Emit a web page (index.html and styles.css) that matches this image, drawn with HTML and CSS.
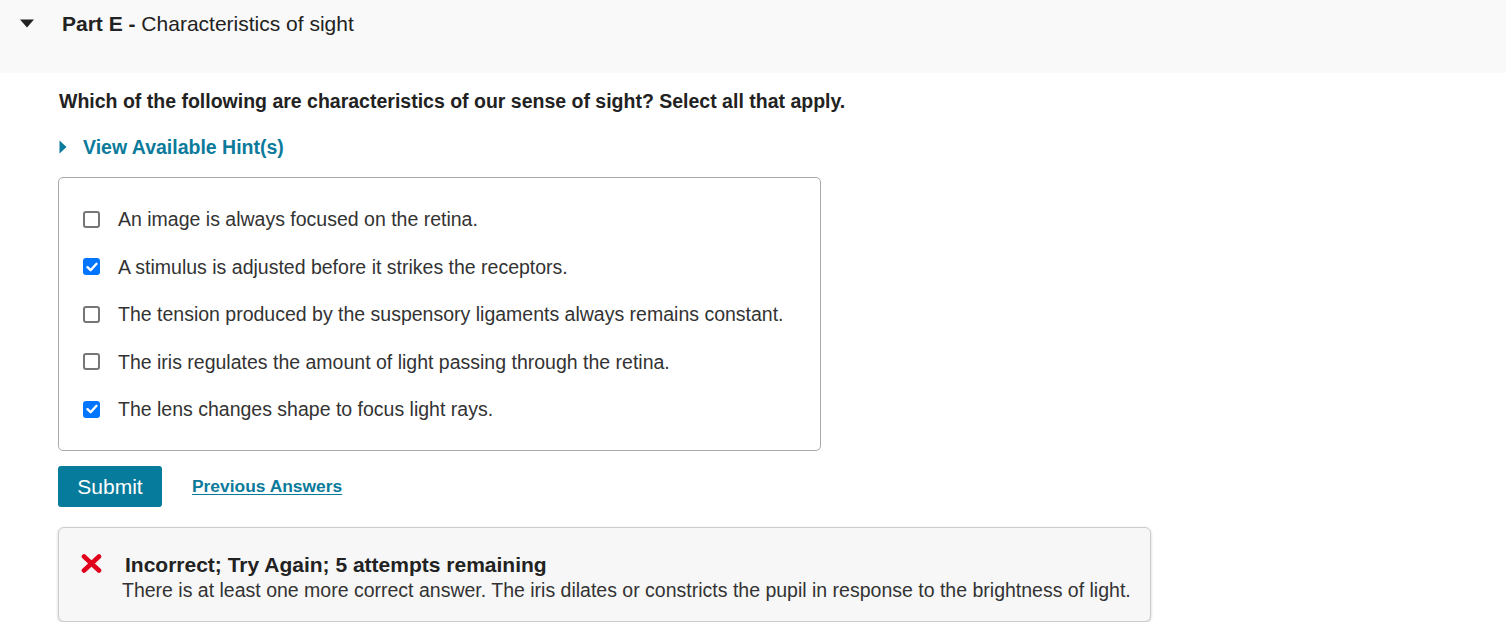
FILE: index.html
```html
<!DOCTYPE html>
<html>
<head>
<meta charset="utf-8">
<link rel="stylesheet" href="styles.css">
</head>
<body>
<div class="part-header">
  <svg class="caret-down" width="16" height="9" viewBox="0 0 16 9"><path d="M1 0.5 L15 0.5 L8 8.5 Z" fill="#222"/></svg>
  <h2 class="part-title"><b>Part E -</b> Characteristics of sight</h2>
</div>
<div class="content">
  <p class="question">Which of the following are characteristics of our sense of sight? Select all that apply.</p>
  <div class="hint">
    <svg class="caret-right" width="8" height="14" viewBox="0 0 8 14"><path d="M0.5 0.5 L7.5 7 L0.5 13.5 Z" fill="#0b7a9b"/></svg>
    <span>View Available Hint(s)</span>
  </div>
  <div class="options">
    <label class="option"><span class="cb"></span><span>An image is always focused on the retina.</span></label>
    <label class="option"><span class="cb checked"><svg width="12" height="10" viewBox="0 0 12 10"><path d="M1.5 5.2 L4.6 8.2 L10.5 1.8" fill="none" stroke="#fff" stroke-width="2.4" stroke-linecap="round" stroke-linejoin="round"/></svg></span><span>A stimulus is adjusted before it strikes the receptors.</span></label>
    <label class="option"><span class="cb"></span><span>The tension produced by the suspensory ligaments always remains constant.</span></label>
    <label class="option"><span class="cb"></span><span>The iris regulates the amount of light passing through the retina.</span></label>
    <label class="option"><span class="cb checked"><svg width="12" height="10" viewBox="0 0 12 10"><path d="M1.5 5.2 L4.6 8.2 L10.5 1.8" fill="none" stroke="#fff" stroke-width="2.4" stroke-linecap="round" stroke-linejoin="round"/></svg></span><span>The lens changes shape to focus light rays.</span></label>
  </div>
  <div class="actions">
    <button class="submit">Submit</button>
    <a class="prev" href="#">Previous Answers</a>
  </div>
  <div class="feedback">
    <svg class="xicon" width="21" height="19" viewBox="0 0 21 19"><path d="M3 2.5 L18 16.5 M18 2.5 L3 16.5" stroke="#e0001b" stroke-width="4.6" stroke-linecap="round"/></svg>
    <div class="fb-text">
      <div class="fb-title">Incorrect; Try Again; 5 attempts remaining</div>
      <div class="fb-body">There is at least one more correct answer. The iris dilates or constricts the pupil in response to the brightness of light.</div>
    </div>
  </div>
</div>
</body>
</html>
```
FILE: styles.css
```css
* { box-sizing: border-box; }
body {
  margin: 0;
  font-family: "Liberation Sans", Arial, sans-serif;
  color: #333;
  background: #fff;
}
.part-header {
  background: #f9f9f9;
  height: 73px;
  display: flex;
  align-items: flex-start;
  padding-top: 12px;
}
.caret-down {
  margin-left: 19px;
  margin-top: 7px;
}
.part-title {
  margin: 0 0 0 27px;
  font-size: 21px;
  font-weight: normal;
  color: #222;
  line-height: 24px;
}
.part-title b { font-weight: bold; }
.content {
  padding-left: 58px;
}
.question {
  margin: 17px 0 0 1px;
  font-size: 19.5px;
  font-weight: bold;
  color: #222;
  line-height: 22px;
}
.hint {
  display: flex;
  align-items: center;
  margin-top: 24px;
  margin-left: 1px;
  color: #0b7a9b;
  font-weight: bold;
  font-size: 19.5px;
  line-height: 22px;
}
.hint svg { margin-right: 16px; }
.options {
  width: 763px;
  margin-top: 19px;
  border: 1px solid #aaa;
  border-radius: 5px;
  padding: 30px 0 30px 24px;
  display: flex;
  flex-direction: column;
  gap: 25.5px;
}
.option {
  display: flex;
  align-items: center;
  font-size: 19.5px;
  line-height: 22px;
  color: #333;
}
.cb {
  width: 17px;
  height: 17px;
  border: 2px solid #767676;
  border-radius: 3px;
  margin-right: 18px;
  display: flex;
  align-items: center;
  justify-content: center;
  flex: none;
}
.cb.checked {
  background: #0075ff;
  border-color: #0075ff;
}
.actions {
  display: flex;
  align-items: center;
  margin-top: 15px;
}
.submit {
  width: 104px;
  height: 41px;
  background: #077b9b;
  color: #fff;
  border: none;
  border-radius: 3px;
  font-family: "Liberation Sans", Arial, sans-serif;
  font-size: 21px;
  padding: 0;
}
.prev {
  margin-left: 30px;
  color: #0b7a9b;
  font-weight: bold;
  font-size: 17.4px;
  text-decoration: underline;
  text-underline-offset: 2px;
}
.feedback {
  width: 1093px;
  margin-top: 20px;
  background: #f7f7f7;
  border: 1px solid #ccc;
  border-radius: 6px;
  box-shadow: 0 1px 3px rgba(0,0,0,0.2);
  display: flex;
  align-items: flex-start;
  padding: 25px 0 18px 22px;
}
.xicon { margin-top: 1px; margin-right: 22px; flex: none; }
.fb-title {
  font-weight: bold;
  font-size: 21px;
  line-height: 24px;
  color: #222;
  margin-left: 1px;
}
.fb-body {
  font-size: 19.5px;
  line-height: 26px;
  color: #333;
  margin-left: -2px;
}
```
